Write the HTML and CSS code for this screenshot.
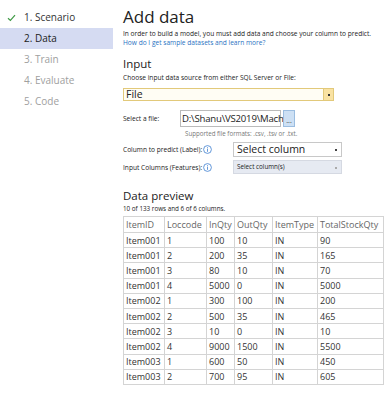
FILE: index.html
```html
<!doctype html>
<html>
    <head>
        <title>Add data</title>
        <link rel="stylesheet" href="styles.css">
    </head>
    <body>
        <div class="page">
            <!-- Steps -->
            <div class="steps">
                <div class="step done">
                    <svg class="check" width="9" height="8" viewBox="0 0 9 8"><path d="M1 4.2 L3.4 6.5 L8 1.2" fill="none" stroke="#3f9a45" stroke-width="1.2"/></svg>
                    1. Scenario
                </div>
                <div class="step current">2. Data</div>
                <div class="step off">3. Train</div>
                <div class="step off">4. Evaluate</div>
                <div class="step off">5. Code</div>
            </div>

            <!-- Content -->
            <div class="content">
                <h1>Add data</h1>
                <p class="desc">In order to build a model, you must add data and choose your column to predict.<br>
                    <a href="#">How do I get sample datasets and learn more?</a></p>

                <h2>Input</h2>
                <p class="desc choose">Choose input data source from either SQL Server or File:</p>

                <div class="source">
                    <span>File</span>
                    <span class="source-btn"><i></i></span>
                </div>

                <div class="file-row">
                    <span class="label">Select a file:</span>
                    <span class="file-box">D:\Shanu\VS2019\Mach</span>
                    <span class="browse">...</span>
                </div>
                <p class="hint">Supported file formats: .csv, .tsv or .txt.</p>

                <div class="field-row">
                    <span class="label">Column to predict (Label):<svg class="info" width="9" height="9" viewBox="0 0 9 9"><circle cx="4.5" cy="4.5" r="3.9" fill="none" stroke="#3d7fd0" stroke-width="0.8"/><rect x="4.1" y="3.6" width="0.8" height="3.2" fill="#3d7fd0"/><rect x="4.1" y="2.1" width="0.8" height="0.8" fill="#3d7fd0"/></svg></span>
                    <span class="select big">Select column<i class="arrow"></i></span>
                </div>
                <div class="field-row second">
                    <span class="label">Input Columns (Features):<svg class="info" width="9" height="9" viewBox="0 0 9 9"><circle cx="4.5" cy="4.5" r="3.9" fill="none" stroke="#3d7fd0" stroke-width="0.8"/><rect x="4.1" y="3.6" width="0.8" height="3.2" fill="#3d7fd0"/><rect x="4.1" y="2.1" width="0.8" height="0.8" fill="#3d7fd0"/></svg></span>
                    <span class="select small">Select column(s)<i class="arrow light"></i></span>
                </div>

                <h2 class="preview">Data preview</h2>
                <p class="desc count">10 of 133 rows and 6 of 6 columns.</p>

                <table class="grid">
                    <colgroup><col class="c1"><col class="c2"><col class="c3"><col class="c4"><col class="c5"><col class="c6"></colgroup>
                    <tr class="head"><td>ItemID</td><td>Loccode</td><td>InQty</td><td>OutQty</td><td>ItemType</td><td>TotalStockQty</td></tr>
                    <tr><td>Item001</td><td>1</td><td>100</td><td>10</td><td>IN</td><td>90</td></tr>
                    <tr><td>Item001</td><td>2</td><td>200</td><td>35</td><td>IN</td><td>165</td></tr>
                    <tr><td>Item001</td><td>3</td><td>80</td><td>10</td><td>IN</td><td>70</td></tr>
                    <tr><td>Item001</td><td>4</td><td>5000</td><td>0</td><td>IN</td><td>5000</td></tr>
                    <tr><td>Item002</td><td>1</td><td>300</td><td>100</td><td>IN</td><td>200</td></tr>
                    <tr><td>Item002</td><td>2</td><td>500</td><td>35</td><td>IN</td><td>465</td></tr>
                    <tr><td>Item002</td><td>3</td><td>10</td><td>0</td><td>IN</td><td>10</td></tr>
                    <tr><td>Item002</td><td>4</td><td>9000</td><td>1500</td><td>IN</td><td>5500</td></tr>
                    <tr><td>Item003</td><td>1</td><td>600</td><td>50</td><td>IN</td><td>450</td></tr>
                    <tr><td>Item003</td><td>2</td><td>700</td><td>95</td><td>IN</td><td>605</td></tr>
                </table>
            </div>
        </div>
    </body>
</html>
```

FILE: styles.css
```css
body {
    margin: 0;
    background-color: #fff;
    font-family: "Open Sans", "Noto Sans", sans-serif;
    color: #222;
}

.page {
    display: flex;
}

.steps {
    width: 113px;
    padding-top: 7px;
    flex-shrink: 0;
}

.step {
    height: 21px;
    line-height: 21px;
    padding-left: 24px;
    font-size: 10px;
    color: #333;
    position: relative;
}

.step .check {
    position: absolute;
    left: 7px;
    top: 7px;
}

.step.current {
    background-color: #d5dbf2;
    color: #222;
}

.step.off {
    color: #a0a0a0;
}

.content {
    padding-left: 10px;
    width: 268px;
}

h1 {
    font-size: 17px;
    font-weight: normal;
    line-height: 20px;
    margin: 7px 0 0 0;
    color: #222;
}

h2 {
    font-size: 11.5px;
    font-weight: normal;
    line-height: 14px;
    margin: 10.5px 0 0 0;
    color: #222;
}

.desc {
    font-size: 6.6px;
    line-height: 9px;
    margin: 1.5px 0 0 0;
    color: #222;
    white-space: nowrap;
}

.desc a {
    color: #2a72c2;
    text-decoration: none;
}

.source {
    margin-top: 6.5px;
    width: 207px;
    height: 11px;
    border: 1px solid #e2c97a;
    background-color: #fffdf4;
    display: flex;
    justify-content: space-between;
    font-size: 10.5px;
    line-height: 11px;
    padding-left: 2px;
}

.source-btn {
    width: 9px;
    background-color: #f9e2a3;
    border-left: 1px solid #e2c97a;
    display: flex;
    align-items: center;
    justify-content: center;
}

.source-btn i {
    width: 2px;
    height: 2px;
    background-color: #333;
}

.file-row, .field-row {
    display: flex;
    align-items: center;
    margin-top: 9px;
}

.label {
    font-size: 6.6px;
    color: #222;
    display: flex;
    align-items: center;
    white-space: nowrap;
}

.file-row .label {
    width: 57px;
}

.file-box {
    width: 98px;
    height: 15px;
    border: 1px solid #bbb;
    font-size: 9.6px;
    letter-spacing: -0.2px;
    line-height: 15px;
    padding-left: 1px;
    white-space: nowrap;
}

.browse {
    margin-left: 2px;
    width: 11px;
    height: 15px;
    background-color: #cde0f4;
    border: 1px solid #9bbde0;
    font-size: 7px;
    line-height: 7px;
    text-align: center;
    color: #333;
    display: flex;
    align-items: flex-end;
    justify-content: center;
    box-sizing: border-box;
    padding-bottom: 2px;
    height: 17px;
    width: 12px;
}

.hint {
    margin: 3px 0 0 62px;
    font-size: 6.2px;
    line-height: 8px;
    color: #777;
    white-space: nowrap;
}

.field-row {
    margin-top: 4px;
}

.field-row.second {
    margin-top: 3px;
}

.field-row .label {
    width: 110px;
}

.info {
    margin-left: 1px;
}

.select {
    width: 104px;
    border: 1px solid #c8c8c8;
    position: relative;
    padding-left: 3px;
    white-space: nowrap;
}

.select.big {
    height: 13px;
    line-height: 13px;
    font-size: 10.5px;
    background-color: #fff;
}

.select.small {
    height: 12px;
    line-height: 12px;
    font-size: 6.3px;
    background-color: #e6eaf2;
    border-color: #d5d9e2;
}

.arrow {
    position: absolute;
    right: 4px;
    top: 6px;
    width: 2px;
    height: 1.5px;
    background-color: #444;
}

.arrow.light {
    background-color: #aaa;
}

.preview {
    margin-top: 15px;
}

.count {
    font-size: 6.3px;
    margin-top: 0.5px;
}

.grid {
    margin-top: 3.5px;
    border-collapse: collapse;
    table-layout: fixed;
    width: 260px;
    font-size: 9px;
    color: #333;
}

.grid td {
    border: 1px solid #d4d4d4;
    height: 14.2px;
    line-height: 13px;
    padding: 0 0 0 2px;
    white-space: nowrap;
    overflow: hidden;
}

.grid .head td {
    height: 15px;
    color: #666;
}

.grid .c1 { width: 41px; }
.grid .c2 { width: 42px; }
.grid .c3 { width: 28px; }
.grid .c4 { width: 38px; }
.grid .c5 { width: 45px; }
.grid .c6 { width: 66px; }
```
